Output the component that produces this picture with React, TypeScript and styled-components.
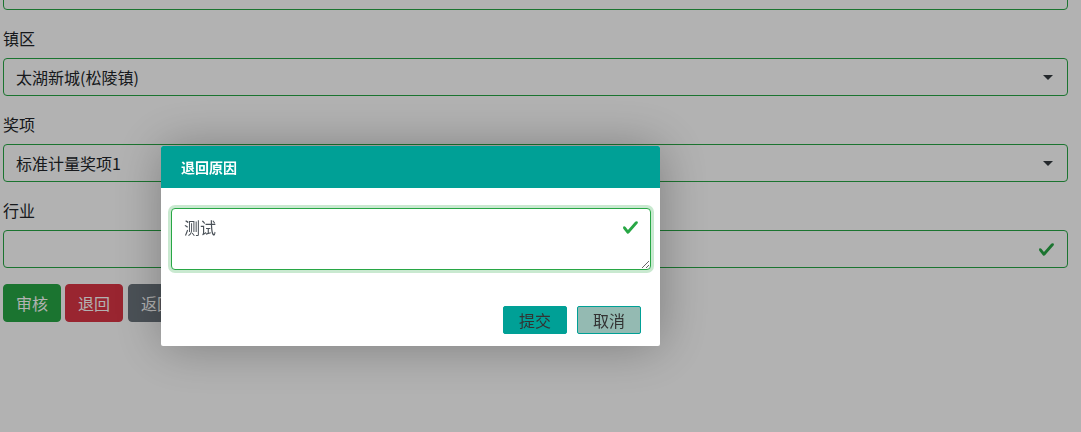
import React from "react";
import styled, { createGlobalStyle } from "styled-components";

const GlobalStyle = createGlobalStyle`
  html, body {
    margin: 0;
    padding: 0;
    background: #fff;
    overflow: hidden;
  }
  body {
    font-family: "Noto Sans CJK SC", "Liberation Sans", sans-serif;
    font-size: 16px;
    line-height: 24px;
    color: #212529;
  }
  * {
    box-sizing: border-box;
  }
`;

const checkIcon = `url("data:image/svg+xml,%3csvg xmlns='http://www.w3.org/2000/svg' width='8' height='8' viewBox='0 0 8 8'%3e%3cpath fill='%2328a745' d='M2.3 6.73L.6 4.53c-.4-1.04.46-1.4 1.1-.8l1.1 1.4 3.4-3.8c.6-.63 1.6-.27 1.2.7l-4 4.6c-.43.5-.8.4-1.1.1z'/%3e%3c/svg%3e")`;

const Page = styled.main`
  width: 1068px;
  height: 432px;
  padding: 0 0 0 3px;
  margin-top: -28px;
`;

const FormGroup = styled.div`
  margin-bottom: 16px;
`;

const Label = styled.label`
  display: block;
  margin-bottom: 8px;
  font-size: 16px;
  line-height: 24px;
`;

const Field = styled.div<{ $valid?: boolean }>`
  position: relative;
  height: 38px;
  padding: 6px 36px 6px 12px;
  border: 1px solid #28a745;
  border-radius: 4px;
  background-color: #fff;
  color: #212529;
  font-size: 16px;
  line-height: 24px;
  ${(p) =>
    p.$valid
      ? `
    background-image: ${checkIcon};
    background-repeat: no-repeat;
    background-position: right 12px center;
    background-size: 17px 17px;
  `
      : ""}
`;

const Caret = styled.span`
  position: absolute;
  right: 14px;
  top: 16px;
  width: 0;
  height: 0;
  border-left: 5px solid transparent;
  border-right: 5px solid transparent;
  border-top: 5px solid #343a40;
`;

const ButtonRow = styled.div`
  display: flex;
  gap: 4px;
`;

const ActionButton = styled.button<{ $tone: string }>`
  height: 38px;
  padding: 6px 12px;
  border: 1px solid ${(p) => p.$tone};
  border-radius: 4px;
  background: ${(p) => p.$tone};
  color: #fff;
  font-family: inherit;
  font-size: 16px;
  line-height: 24px;
  & + & + & {
    margin-left: 1px;
  }
`;

const Shade = styled.div`
  position: fixed;
  inset: 0;
  background: rgba(0, 0, 0, 0.3);
`;

const Layer = styled.div`
  position: fixed;
  left: 161px;
  top: 146px;
  width: 499px;
  background: #fff;
  border-radius: 2px;
  box-shadow: 1px 1px 50px rgba(0, 0, 0, 0.3);
  overflow: hidden;
`;

const LayerTitle = styled.div`
  height: 42px;
  padding: 0 80px 0 20px;
  background: #00a096;
  color: #fff;
  font-size: 14px;
  font-weight: bold;
  line-height: 42px;
`;

const LayerBody = styled.div`
  padding: 20px 9px 0 10px;
  height: 118px;
`;

const TextArea = styled.textarea`
  display: block;
  width: 480px;
  height: 62px;
  padding: 6px 36px 6px 12px;
  border: 1px solid #28a745;
  border-radius: 4px;
  box-shadow: 0 0 0 3px rgba(40, 167, 69, 0.25);
  outline: none;
  resize: vertical;
  color: #495057;
  caret-color: #212529;
  font-family: inherit;
  font-size: 16px;
  line-height: 24px;
  background-color: #fff;
  background-image: ${checkIcon};
  background-repeat: no-repeat;
  background-position: right 11px top 10px;
  background-size: 17px 17px;
`;

const LayerFooter = styled.div`
  display: flex;
  justify-content: flex-end;
  gap: 10px;
  padding: 0 19px 12px 15px;
`;

const LayerButton = styled.button<{ $primary?: boolean }>`
  height: 28px;
  padding: 0 15px;
  border: 1px solid #00a096;
  border-radius: 2px;
  background: ${(p) => (p.$primary ? "#00a096" : "#94bab2")};
  color: #333;
  font-family: inherit;
  font-size: 16px;
  line-height: 26px;
  min-width: 64px;
`;

const App = () => {
  return (
    <>
      <GlobalStyle />
      <Page>
        <FormGroup>
          <Field />
        </FormGroup>
        <FormGroup>
          <Label>镇区</Label>
          <Field>
            太湖新城(松陵镇)
            <Caret />
          </Field>
        </FormGroup>
        <FormGroup>
          <Label>奖项</Label>
          <Field>
            标准计量奖项1
            <Caret />
          </Field>
        </FormGroup>
        <FormGroup>
          <Label>行业</Label>
          <Field $valid />
        </FormGroup>
        <ButtonRow>
          <ActionButton $tone="#28a745">审核</ActionButton>
          <ActionButton $tone="#dc3545">退回</ActionButton>
          <ActionButton $tone="#6c757d">返回</ActionButton>
        </ButtonRow>
      </Page>
      <Shade />
      <Layer>
        <LayerTitle>退回原因</LayerTitle>
        <LayerBody>
          <TextArea defaultValue="测试" autoFocus />
        </LayerBody>
        <LayerFooter>
          <LayerButton $primary>提交</LayerButton>
          <LayerButton>取消</LayerButton>
        </LayerFooter>
      </Layer>
    </>
  );
};

export default App;
